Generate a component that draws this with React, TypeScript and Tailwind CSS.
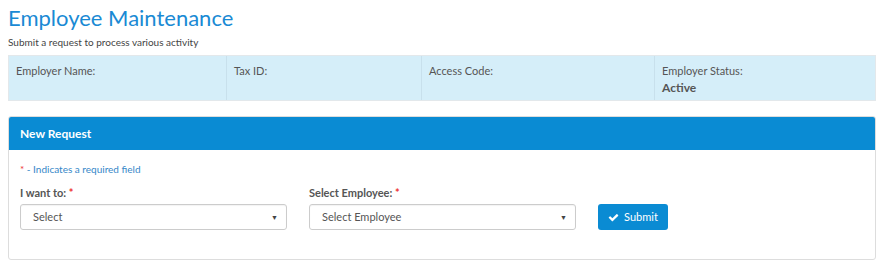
import React from "react";

const font = { fontFamily: "Lato, 'Open Sans', sans-serif" };

function InfoCell({ label, value, className }: { label: string; value?: string; className?: string }) {
  return (
    <div className={"px-[7px] pt-[8px] " + (className ?? "")}>
      <div className="text-[11px] leading-[13px] text-[#555]">{label}</div>
      {value && <div className="mt-[3px] text-[12px] leading-[15px] font-bold text-[#555]">{value}</div>}
    </div>
  );
}

function SelectBox({ placeholder }: { placeholder: string }) {
  return (
    <div className="relative flex h-[26px] w-[267px] items-center rounded-[3px] border border-[#ccc] bg-white pl-[12px] shadow-[inset_0_1px_1px_rgba(0,0,0,0.05)]">
      <span className="text-[11px] text-[#555]">{placeholder}</span>
      <span className="absolute right-[8px] top-[7px] text-[7px] text-[#444]">▼</span>
    </div>
  );
}

export default function App() {
  return (
    <div className="min-h-[271px] bg-white px-[8px] pt-[4px]" style={font}>
      <h1 className="text-[22px] leading-[27px] text-[#1a8ad4]">Employee Maintenance</h1>
      <p className="mt-[5px] text-[10px] leading-[12px] text-[#444]">Submit a request to process various activity</p>

      <div className="mt-[7px] grid h-[46px] w-[868px] grid-cols-[217px_195px_233px_1fr] border border-[#e3e8eb] bg-[#d5eef9]">
        <InfoCell label="Employer Name:" />
        <InfoCell label="Tax ID:" className="border-l border-[#c8e0ec]" />
        <InfoCell label="Access Code:" className="border-l border-[#c8e0ec]" />
        <InfoCell label="Employer Status:" value="Active" className="border-l border-[#c8e0ec]" />
      </div>

      <div className="mt-[15px] w-[868px] overflow-hidden rounded-[3px] border border-[#ddd]">
        <div className="flex h-[33px] items-center bg-[#0a8bd3] px-[11px]">
          <span className="text-[12px] font-bold text-white">New Request</span>
        </div>
        <div className="px-[11px] pt-[13px] pb-[29px]">
          <div className="text-[10px] leading-[12px] text-[#3587c8]">
            <span className="text-[#e33]">*</span> - Indicates a required field
          </div>
          <div className="mt-[11px] flex items-end gap-[22px]">
            <div>
              <div className="mb-[5px] text-[11px] font-bold leading-[13px] text-[#555]">
                I want to: <span className="text-[#e33]">*</span>
              </div>
              <SelectBox placeholder="Select" />
            </div>
            <div>
              <div className="mb-[5px] text-[11px] font-bold leading-[13px] text-[#555]">
                Select Employee: <span className="text-[#e33]">*</span>
              </div>
              <SelectBox placeholder="Select Employee" />
            </div>
            <button className="flex h-[26px] w-[70px] items-center justify-center gap-[5px] rounded-[3px] bg-[#0a8bd3] text-[11px] text-white">
              <svg viewBox="0 0 1792 1792" className="h-[11px] w-[11px]" fill="currentColor">
                <path d="M1671 566q0 40-28 68l-724 724-136 136q-28 28-68 28t-68-28l-136-136-362-362q-28-28-28-68t28-68l136-136q28-28 68-28t68 28l294 295 656-657q28-28 68-28t68 28l136 136q28 28 28 68z" />
              </svg>
              Submit
            </button>
          </div>
        </div>
      </div>
    </div>
  );
}
